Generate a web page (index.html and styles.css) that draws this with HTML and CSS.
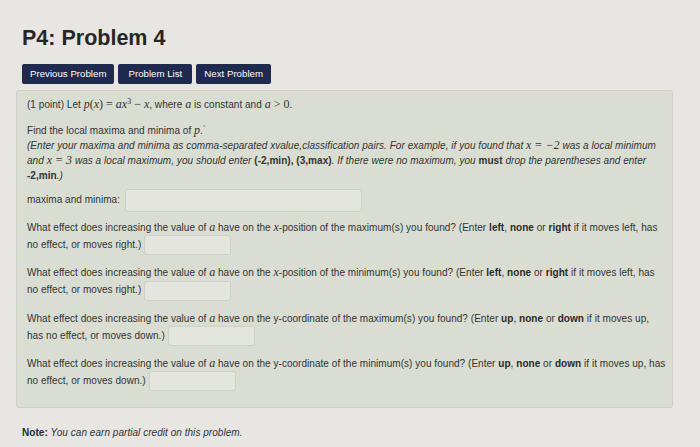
FILE: index.html
```html
<!DOCTYPE html>
<html>
<head>
<meta charset="utf-8">
<link rel="stylesheet" href="styles.css">
</head>
<body>
<div class="page">
  <h1 class="title">P4: Problem 4</h1>
  <div class="nav">
    <span class="btn">Previous Problem</span>
    <span class="btn btn-list">Problem List</span>
    <span class="btn">Next Problem</span>
  </div>
  <div class="problem">
    <p class="intro">(1 point) Let <span class="m">p</span><span class="mr">(</span><span class="m">x</span><span class="mr">) = </span><span class="m">ax</span><sup class="mr">3</sup><span class="mr"> − </span><span class="m">x</span>, where <span class="m">a</span> is constant and <span class="m">a</span><span class="mr"> &gt; 0</span>.</p>
    <div class="task">
      <div>Find the local maxima and minima of <span class="m">p</span>.<sup class="star">*</sup></div>
      <div class="hint">(Enter your maxima and minima as comma-separated xvalue,classification pairs. For example, if you found that <span class="m">x</span><span class="mr"> = −2</span> was a local minimum and <span class="m">x</span><span class="mr"> = 3</span> was a local maximum, you should enter <b class="up">(-2,min), (3,max)</b>. If there were no maximum, you <b class="up">must</b> drop the parentheses and enter <b class="up">-2,min</b>.)</div>
    </div>
    <div class="answer">maxima and minima: <span class="field wide"></span></div>
    <div class="q first">What effect does increasing the value of <span class="m">a</span> have on the <span class="m">x</span>-position of the maximum(s) you found? (Enter <b>left</b>, <b>none</b> or <b>right</b> if it moves left, has no effect, or moves right.) <span class="field"></span></div>
    <div class="q">What effect does increasing the value of <span class="m">a</span> have on the <span class="m">x</span>-position of the minimum(s) you found? (Enter <b>left</b>, <b>none</b> or <b>right</b> if it moves left, has no effect, or moves right.) <span class="field"></span></div>
    <div class="q">What effect does increasing the value of <span class="m">a</span> have on the y-coordinate of the maximum(s) you found? (Enter <b>up</b>, <b>none</b> or <b>down</b> if it moves up, has no effect, or moves down.) <span class="field"></span></div>
    <div class="q">What effect does increasing the value of <span class="m">a</span> have on the y-coordinate of the minimum(s) you found? (Enter <b>up</b>, <b>none</b> or <b>down</b> if it moves up, has no effect, or moves down.) <span class="field"></span></div>
  </div>
  <div class="note"><b>Note:</b> <i>You can earn partial credit on this problem.</i></div>
</div>
</body>
</html>
```

FILE: styles.css
```css
html, body {
  margin: 0;
  padding: 0;
}
body {
  background: #e7e6e2;
  font-family: "Liberation Sans", Arial, sans-serif;
  color: #333;
  width: 700px;
  height: 447px;
  overflow: hidden;
}
.page {
  padding: 26px 27px 0 16px;
}
.title {
  margin: 0 0 0 6px;
  font-size: 21.5px;
  line-height: 24px;
  font-weight: bold;
  color: #262626;
}
.nav {
  display: flex;
  gap: 4px;
  margin: 14px 0 6px 6px;
}
.btn {
  display: inline-block;
  background: #1f2a4e;
  color: #fff;
  font-size: 9.7px;
  line-height: 20px;
  height: 20px;
  padding: 0 8px;
  border-radius: 2px;
}
.btn-list {
  padding: 0 10px;
}
.problem {
  background: #d9ddd2;
  border: 1px solid #cdd1c6;
  border-radius: 3px;
  padding: 6px 4px 18px 10px;
  font-size: 10px;
  letter-spacing: 0.04px;
  line-height: 15px;
  color: #333;
}
.problem p {
  margin: 0;
}
.m {
  font-family: "Liberation Serif", "Times New Roman", serif;
  font-style: italic;
  font-size: 12px;
  letter-spacing: 0;
}
.mr {
  font-family: "Liberation Serif", "Times New Roman", serif;
  font-size: 12px;
  letter-spacing: 0;
}
sup.mr {
  font-size: 8px;
  vertical-align: 4px;
  line-height: 0;
}
.star {
  font-size: 6px;
  vertical-align: 5px;
  line-height: 0;
  color: #777;
}
.task {
  margin-top: 11px;
}
.hint {
  font-style: italic;
}
.up {
  font-style: normal;
}
.answer {
  margin-top: 6px;
  line-height: 22px;
}
.field {
  display: inline-block;
  vertical-align: middle;
  width: 87px;
  height: 20px;
  margin: -2px 0;
  background: #e3e5de;
  border: 1px solid #ccd0c7;
  border-radius: 3px;
  box-sizing: border-box;
}
.field.wide {
  width: 237px;
  height: 23px;
  margin: 0 0 0 2px;
}
.q {
  margin-top: 11px;
  line-height: 17px;
}
.q.first {
  margin-top: 7px;
}
.q b {
  color: #2a2a2a;
}
.note {
  margin: 17px 0 0 6px;
  font-size: 10px;
  letter-spacing: 0.04px;
  line-height: 15px;
  color: #333;
}
.note b {
  color: #2a2a2a;
}
```
